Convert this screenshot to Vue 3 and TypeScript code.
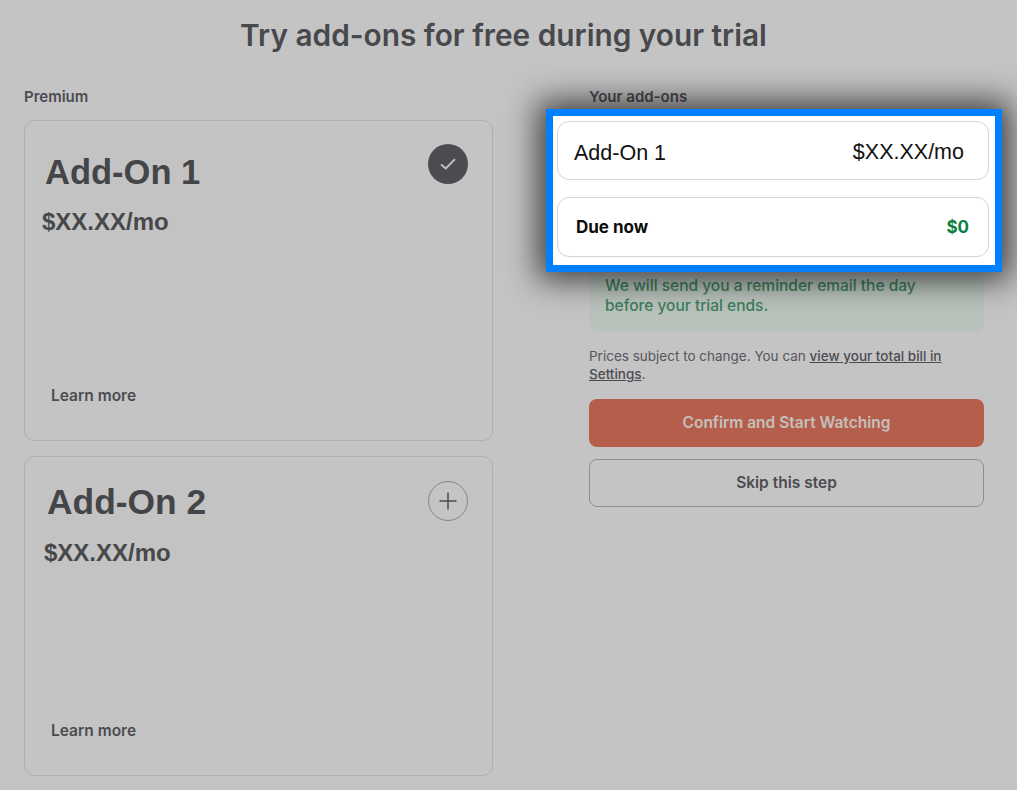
<script setup lang="ts">
interface AddOn {
  name: string
  price: string
  selected: boolean
  variant: string
}
const addOns: AddOn[] = [
  { name: 'Add-On 1', price: '$XX.XX/mo', selected: true, variant: 'first' },
  { name: 'Add-On 2', price: '$XX.XX/mo', selected: false, variant: 'second' },
]
</script>

<template>
  <main class="page">
    <h1 class="title">Try add-ons for free during your trial</h1>
    <div class="columns">
      <section class="left">
        <h2 class="label">Premium</h2>
        <article v-for="a in addOns" :key="a.name" class="card" :class="a.variant">
          <div class="patch patch-a"></div>
          <div class="patch patch-b"></div>
          <div class="card-head">
            <div>
              <h3 class="card-name">{{ a.name }}</h3>
              <p class="card-price">{{ a.price }}</p>
            </div>
            <span v-if="a.selected" class="toggle on">
              <svg width="18" height="14" viewBox="0 0 18 14" fill="none">
                <path d="M2 7.5 L6.8 11.5 L16 2.2" stroke="#c4c4c4" stroke-width="1.8" />
              </svg>
            </span>
            <span v-else class="toggle off">
              <svg width="18" height="18" viewBox="0 0 18 18" fill="none">
                <path d="M9 0.5 V17.5 M0.5 9 H17.5" stroke="#4b4c52" stroke-width="1.5" />
              </svg>
            </span>
          </div>
          <a class="learn">Learn more</a>
        </article>
      </section>
      <section class="right">
        <h2 class="label">Your add-ons</h2>
        <div class="slot">
          <div class="highlight">
            <div class="row big">
              <span>Add-On 1</span>
              <span>$XX.XX/mo</span>
            </div>
            <div class="row due">
              <span>Due now</span>
              <span class="zero">$0</span>
            </div>
          </div>
        </div>
        <div class="notice">We will send you a reminder email the day before your trial ends.</div>
        <p class="fine">Prices subject to change. You can <a>view your total bill in</a><br /><a>Settings</a>.</p>
        <button class="btn primary">Confirm and Start Watching</button>
        <button class="btn ghost">Skip this step</button>
      </section>
    </div>
  </main>
</template>

<style>
html, body { margin: 0; background: #c4c4c4; }
</style>

<style scoped>
.page {
  height: 790px;
  overflow: hidden;
  box-sizing: border-box;
  background: #c4c4c4;
  padding-top: 15px;
  font-family: Inter, "Liberation Sans", sans-serif;
  color: #4b4c52;
}
.title {
  margin: 0 0 0 -10px;
  text-align: center;
  font-size: 29.8px;
  line-height: 40px;
  font-weight: 600;
  color: #48494d;
}
.columns {
  display: grid;
  grid-template-columns: 469px 395px;
  column-gap: 96px;
  padding: 32px 0 0 24px;
}
.label {
  margin: 0 0 13px;
  font-size: 15px;
  line-height: 20px;
  font-weight: 600;
}
.card {
  position: relative;
  box-sizing: border-box;
  width: 469px;
  height: 321px;
  border: 1px solid #aeaeba;
  border-radius: 10px;
  display: flex;
  flex-direction: column;
  justify-content: space-between;
  padding: 23px 24px 34px 17px;
  margin-bottom: 15px;
}
.card.second { height: 320px; }
.patch { position: absolute; background: #c3c3c3; }
.first .patch-a { left: 17px; top: 29px; width: 270px; height: 143px; }
.first .patch-b { left: 17px; top: 179px; width: 410px; height: 63px; }
.second .patch-a { left: 17px; top: 21px; width: 194px; height: 150px; }
.second .patch-b { left: 17px; top: 176px; width: 426px; height: 69px; }
.card-head {
  position: relative;
  display: flex;
  justify-content: space-between;
  align-items: flex-start;
}
.card-name {
  margin: 6px 0 0 3px;
  font-family: "Liberation Sans", Arial, sans-serif;
  font-size: 34.5px;
  line-height: 44px;
  font-weight: 700;
  color: #444548;
}
.second .card-name { margin: 0 0 0 5px; font-size: 35.4px; }
.card-price {
  margin: 14px 0 0;
  font-family: "Liberation Sans", Arial, sans-serif;
  font-size: 24px;
  line-height: 28px;
  font-weight: 700;
  color: #47484b;
}
.second .card-price { margin: 15px 0 0 2px; }
.toggle {
  box-sizing: border-box;
  width: 40px;
  height: 40px;
  border-radius: 50%;
  display: flex;
  align-items: center;
  justify-content: center;
  flex: none;
}
.toggle.on { background: #4b4c52; }
.toggle.off { border: 1px solid #85868c; margin-top: 1px; }
.learn {
  position: relative;
  margin-left: 9px;
  font-size: 15.5px;
  line-height: 20px;
  font-weight: 600;
}
.slot {
  position: relative;
  height: 154px;
}
.highlight {
  position: absolute;
  left: -43px;
  top: -11px;
  width: 456px;
  height: 163px;
  box-sizing: border-box;
  border: 7px solid #0080ff;
  background: #fff;
  padding: 5px 6px 8px 4px;
  display: flex;
  flex-direction: column;
  justify-content: space-between;
  box-shadow: 0 0 30px 8px rgba(0, 0, 0, 0.68);
  z-index: 2;
}
.row {
  box-sizing: border-box;
  height: 59px;
  border: 1px solid #d4d4d4;
  border-radius: 12px;
  display: flex;
  align-items: center;
  justify-content: space-between;
  color: #111;
}
.row.big {
  padding: 5px 24px 0 16px;
  font-family: "Liberation Sans", Arial, sans-serif;
  font-size: 21.5px;
}
.row.big span:last-child { margin-top: -2px; }
.row.due {
  height: 60px;
  padding: 0 19px 0 18px;
  font-size: 17px;
  font-weight: 700;
  color: #0b0b0b;
}
.zero { color: #0a7f3f; }
.notice {
  box-sizing: border-box;
  height: 58px;
  padding: 2px 16px 0;
  background: #b9c3bc;
  border-radius: 0 0 8px 8px;
  color: #3d7e5c;
  font-size: 15.5px;
  line-height: 20px;
  font-weight: 500;
}
.fine {
  margin: 15px 0 16px;
  font-size: 13.5px;
  line-height: 18px;
  color: #56575c;
}
.fine a { text-decoration: underline; font-weight: 500; color: #4b4c52; }
.btn {
  display: block;
  width: 395px;
  height: 48px;
  border-radius: 8px;
  font-family: inherit;
  font-size: 15.5px;
  font-weight: 600;
  padding: 0 0 2px;
}
.primary { background: #b65e4c; border: 0; color: #c4c0bd; margin-bottom: 12px; }
.ghost { background: transparent; border: 1px solid #8a8d99; color: #4b4c52; }
</style>
